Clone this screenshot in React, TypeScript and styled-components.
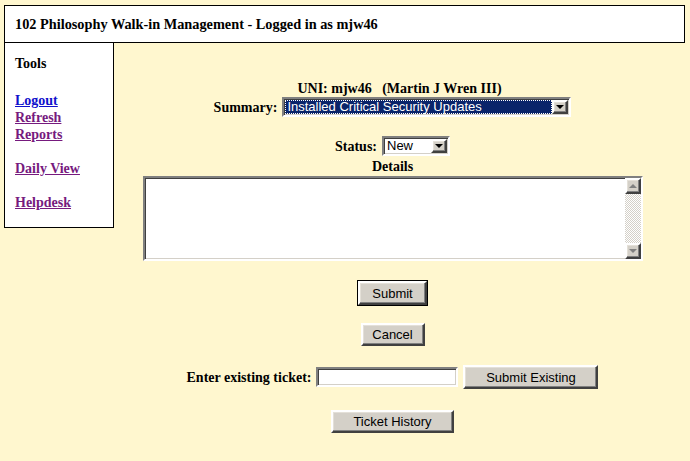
import styled, { createGlobalStyle, css } from "styled-components";

const GlobalStyle = createGlobalStyle`
  html, body {
    margin: 0;
    padding: 0;
    background: #fff7cf;
  }
  body {
    font-family: "Liberation Serif", "Times New Roman", serif;
    font-size: 14px;
    color: #000;
  }
`;

const raised = css`
  border: 2px solid;
  border-color: #ffffff #404040 #404040 #ffffff;
  box-shadow: inset -1px -1px 0 #808080, inset 1px 1px 0 #e4e0d8;
  background: #d4d0c8;
`;

const sunken = css`
  border: 2px solid;
  border-color: #808080 #ffffff #ffffff #808080;
  box-shadow: inset 1px 1px 0 #404040, inset -1px -1px 0 #d4d0c8;
`;

function App() {
  return (
    <Page>
      <GlobalStyle />
      <Header>102 Philosophy Walk-in Management - Logged in as mjw46</Header>
      <Body>
        <Sidebar>
          <SideTitle>Tools</SideTitle>
          <LinkGroup>
            <NavLink href="#" $visited={false}>Logout</NavLink>
            <NavLink href="#" $visited>Refresh</NavLink>
            <NavLink href="#" $visited>Reports</NavLink>
          </LinkGroup>
          <LinkGroup>
            <NavLink href="#" $visited>Daily View</NavLink>
          </LinkGroup>
          <LinkGroup>
            <NavLink href="#" $visited>Helpdesk</NavLink>
          </LinkGroup>
        </Sidebar>

        <Main>
          <UniLine>UNI: mjw46 &nbsp;&nbsp;(Martin J Wren III)</UniLine>
          <FieldRow>
            <Label>Summary:</Label>
            <Select $width={289}>
              <SelectValue $selected>Installed Critical Security Updates</SelectValue>
              <ArrowButton>
                <DownArrow />
              </ArrowButton>
            </Select>
          </FieldRow>

          <FieldRow $top={19}>
            <Label>Status:</Label>
            <Select $width={68}>
              <SelectValue>New</SelectValue>
              <ArrowButton>
                <DownArrow />
              </ArrowButton>
            </Select>
          </FieldRow>
          <DetailsLabel>Details</DetailsLabel>
          <TextBox>
            <TextArea />
            <ScrollBar>
              <ScrollButton>
                <UpArrow />
              </ScrollButton>
              <ScrollTrack />
              <ScrollButton>
                <DownArrow $grey />
              </ScrollButton>
            </ScrollBar>
          </TextBox>

          <Button $width={69} $height={24} $default $top={20}>Submit</Button>
          <Button $width={64} $height={23} $top={18}>Cancel</Button>

          <FieldRow $top={19}>
            <Label>Enter existing ticket:</Label>
            <TextInput type="text" />
            <Button $width={135} $height={24} $top={0}>Submit Existing</Button>
          </FieldRow>

          <Button $width={123} $height={23} $top={21}>Ticket History</Button>
        </Main>
      </Body>
    </Page>
  );
}

export default App;

const Page = styled.div`
  width: 690px;
  height: 461px;
  padding: 5px 5px 0 4px;
  box-sizing: border-box;
`;

const Header = styled.div`
  height: 38px;
  box-sizing: border-box;
  border: 1px solid #000;
  background: #fff;
  font-weight: bold;
  font-size: 14.3px;
  display: flex;
  align-items: center;
  padding-left: 10px;
`;

const Body = styled.div`
  display: flex;
  align-items: flex-start;
`;

const Sidebar = styled.div`
  width: 110px;
  height: 186px;
  box-sizing: border-box;
  margin-top: -1px;
  border: 1px solid #000;
  background: #fff;
  padding: 12px 10px;
  display: flex;
  flex-direction: column;
`;

const SideTitle = styled.div`
  font-weight: bold;
  line-height: 17px;
  margin-bottom: 20px;
`;

const LinkGroup = styled.div`
  display: flex;
  flex-direction: column;
  margin-bottom: 17px;
`;

const NavLink = styled.a<{ $visited: boolean }>`
  font-weight: bold;
  line-height: 17px;
  color: ${(p) => (p.$visited ? "#761a7e" : "#1010cc")};
  text-decoration: underline;
`;

const Main = styled.div`
  flex: 1;
  padding: 38px 14px 0 0;
  display: flex;
  flex-direction: column;
  align-items: center;
`;

const UniLine = styled.div`
  font-weight: bold;
  line-height: 16px;
  margin-left: 14px;
`;

const FieldRow = styled.div<{ $top?: number }>`
  display: flex;
  align-items: center;
  gap: 5px;
  margin-top: ${(p) => p.$top ?? 0}px;
`;

const Label = styled.span`
  font-weight: bold;
  padding-top: 2px;
`;

const Select = styled.div<{ $width: number }>`
  ${sunken};
  width: ${(p) => p.$width}px;
  height: 20px;
  box-sizing: border-box;
  background: #fff;
  display: flex;
  align-items: stretch;
  padding: 1px;
`;

const SelectValue = styled.span<{ $selected?: boolean }>`
  flex: 1;
  font-family: "Liberation Sans", Arial, sans-serif;
  font-size: 13px;
  line-height: 14px;
  padding-left: 2px;
  white-space: nowrap;
  overflow: hidden;
  ${(p) =>
    p.$selected &&
    css`
      background: #0a246a;
      color: #fff;
      outline: 1px dotted #fff;
      outline-offset: -1px;
    `}
`;

const ArrowButton = styled.span`
  ${raised};
  width: 16px;
  box-sizing: border-box;
  display: flex;
  align-items: center;
  justify-content: center;
`;

const DownArrow = styled.span<{ $grey?: boolean }>`
  width: 0;
  height: 0;
  border-left: 4px solid transparent;
  border-right: 4px solid transparent;
  border-top: 4px solid ${(p) => (p.$grey ? "#808080" : "#000")};
`;

const UpArrow = styled.span`
  width: 0;
  height: 0;
  border-left: 4px solid transparent;
  border-right: 4px solid transparent;
  border-bottom: 4px solid #808080;
`;

const DetailsLabel = styled.div`
  font-weight: bold;
  line-height: 16px;
  margin-top: 3px;
`;

const TextBox = styled.div`
  ${sunken};
  width: 500px;
  height: 85px;
  box-sizing: border-box;
  background: #fff;
  display: flex;
  margin-top: 1px;
`;

const TextArea = styled.textarea`
  flex: 1;
  border: none;
  resize: none;
  outline: none;
  background: transparent;
`;

const ScrollBar = styled.div`
  width: 16px;
  display: flex;
  flex-direction: column;
`;

const ScrollButton = styled.span`
  ${raised};
  height: 16px;
  box-sizing: border-box;
  display: flex;
  align-items: center;
  justify-content: center;
`;

const ScrollTrack = styled.span`
  flex: 1;
  background-color: #ece9e2;
  background-image: repeating-conic-gradient(#d4d0c8 0% 25%, #ffffff 0% 50%);
  background-size: 2px 2px;
`;

const Button = styled.button<{ $width: number; $height: number; $top: number; $default?: boolean }>`
  ${raised};
  width: ${(p) => p.$width}px;
  height: ${(p) => p.$height}px;
  margin-top: ${(p) => p.$top}px;
  font-family: "Liberation Sans", Arial, sans-serif;
  font-size: 13px;
  color: #000;
  padding: 0;
  ${(p) =>
    p.$default &&
    css`
      outline: 1px solid #000;
      outline-offset: 0;
    `}
`;

const TextInput = styled.input`
  ${sunken};
  width: 142px;
  height: 20px;
  box-sizing: border-box;
  background: #fff;
  outline: none;
  padding: 0 2px;
`;
